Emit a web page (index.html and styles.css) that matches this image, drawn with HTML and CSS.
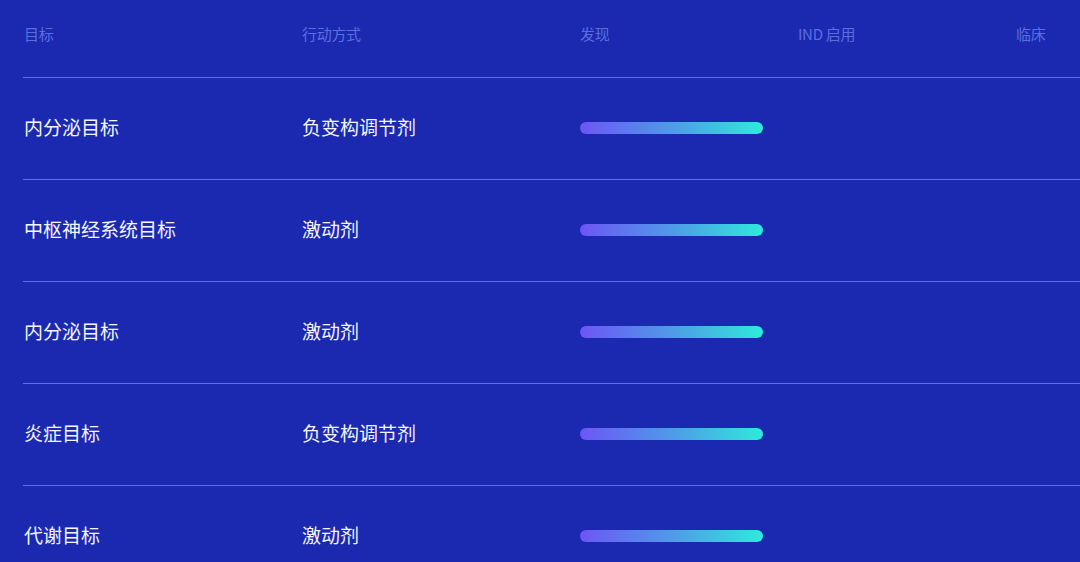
FILE: index.html
```html
<!DOCTYPE html>
<html lang="zh">
<head>
<meta charset="utf-8">
<link rel="stylesheet" href="styles.css">
</head>
<body>
<div class="table">
  <div class="row head">
    <div class="cell">目标</div>
    <div class="cell">行动方式</div>
    <div class="cell">发现</div>
    <div class="cell">IND 启用</div>
    <div class="cell">临床</div>
  </div>
  <div class="row">
    <div class="cell">内分泌目标</div>
    <div class="cell">负变构调节剂</div>
    <div class="cell"><span class="bar"></span></div>
    <div class="cell"></div>
    <div class="cell"></div>
  </div>
  <div class="row">
    <div class="cell">中枢神经系统目标</div>
    <div class="cell">激动剂</div>
    <div class="cell"><span class="bar"></span></div>
    <div class="cell"></div>
    <div class="cell"></div>
  </div>
  <div class="row">
    <div class="cell">内分泌目标</div>
    <div class="cell">激动剂</div>
    <div class="cell"><span class="bar"></span></div>
    <div class="cell"></div>
    <div class="cell"></div>
  </div>
  <div class="row">
    <div class="cell">炎症目标</div>
    <div class="cell">负变构调节剂</div>
    <div class="cell"><span class="bar"></span></div>
    <div class="cell"></div>
    <div class="cell"></div>
  </div>
  <div class="row">
    <div class="cell">代谢目标</div>
    <div class="cell">激动剂</div>
    <div class="cell"><span class="bar"></span></div>
    <div class="cell"></div>
    <div class="cell"></div>
  </div>
</div>
</body>
</html>
```

FILE: styles.css
```css
html, body {
  margin: 0;
  padding: 0;
  background: #1a29af;
  height: 562px;
  overflow: hidden;
}
body {
  font-family: "Noto Sans CJK SC", "Noto Sans", sans-serif;
  color: #f4f5ff;
}
.table {
  padding-left: 23px;
}
.row {
  display: grid;
  grid-template-columns: 278px 278px 218px 218px 1fr;
  align-items: center;
  height: 97px;
  padding-bottom: 4px;
  border-top: 1px solid #5d6fe2;
  font-size: 19px;
  line-height: 24px;
}
.row.head {
  height: 77px;
  padding-bottom: 0;
  border-top: none;
  align-items: start;
  padding-top: 24px;
  box-sizing: border-box;
  font-size: 15px;
  line-height: 20px;
  color: #5a6ee0;
  letter-spacing: -0.3px;
}
.cell {
  padding-left: 1px;
  white-space: nowrap;
}
.bar {
  display: block;
  width: 183px;
  height: 12px;
  margin-top: 2px;
  border-radius: 6px;
  background: linear-gradient(90deg, #6d55f6 0%, #4f9ae8 50%, #2eeadb 100%);
}
```
